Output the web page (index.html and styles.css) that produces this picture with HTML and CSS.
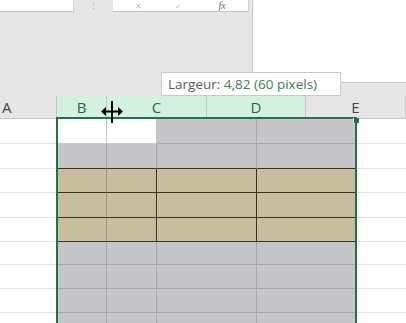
FILE: index.html
```html
<!DOCTYPE html>
<html lang="fr">
<head>
    <meta charset="UTF-8">
    <meta name="viewport" content="width=device-width, initial-scale=1.0">
    <title>Largeur de colonne</title>
    <link rel="stylesheet" href="styles.css">
</head>
<body>
    <div class="sheet">
        <div class="ribbon">
            <div class="namebox"></div>
            <div class="dots">&#8942;</div>
            <div class="fxbox">
                <span class="fx-cancel">&#10005;</span>
                <span class="fx-ok">&#10003;</span>
                <span class="fx-label">fx</span>
            </div>
            <div class="formula"></div>
        </div>

        <div class="colheads">
            <div class="colhead first">A</div>
            <div class="colhead sel">B</div>
            <div class="colhead sel">C</div>
            <div class="colhead sel last-sel">D</div>
            <div class="colhead">E</div>
        </div>

        <div class="grid">
            <div class="row r25">
                <div class="cell out"></div>
                <div class="cell blank"></div>
                <div class="cell blank"></div>
                <div class="cell gray"></div>
                <div class="cell gray"></div>
                <div class="cell out"></div>
            </div>
            <div class="row r25 edge">
                <div class="cell out"></div>
                <div class="cell gray"></div>
                <div class="cell gray"></div>
                <div class="cell gray"></div>
                <div class="cell gray"></div>
                <div class="cell out"></div>
            </div>
            <div class="row r24">
                <div class="cell out"></div>
                <div class="cell tan soft"></div>
                <div class="cell tan"></div>
                <div class="cell tan"></div>
                <div class="cell tan"></div>
                <div class="cell out"></div>
            </div>
            <div class="row r25">
                <div class="cell out"></div>
                <div class="cell tan soft"></div>
                <div class="cell tan"></div>
                <div class="cell tan"></div>
                <div class="cell tan"></div>
                <div class="cell out"></div>
            </div>
            <div class="row r24">
                <div class="cell out"></div>
                <div class="cell tan soft"></div>
                <div class="cell tan"></div>
                <div class="cell tan"></div>
                <div class="cell tan"></div>
                <div class="cell out"></div>
            </div>
            <div class="row r23">
                <div class="cell out"></div>
                <div class="cell gray"></div>
                <div class="cell gray"></div>
                <div class="cell gray"></div>
                <div class="cell gray"></div>
                <div class="cell out"></div>
            </div>
            <div class="row r24">
                <div class="cell out"></div>
                <div class="cell gray"></div>
                <div class="cell gray"></div>
                <div class="cell gray"></div>
                <div class="cell gray"></div>
                <div class="cell out"></div>
            </div>
            <div class="row r24">
                <div class="cell out"></div>
                <div class="cell gray"></div>
                <div class="cell gray"></div>
                <div class="cell gray"></div>
                <div class="cell gray"></div>
                <div class="cell out"></div>
            </div>
            <div class="row r24">
                <div class="cell out"></div>
                <div class="cell gray"></div>
                <div class="cell gray"></div>
                <div class="cell gray"></div>
                <div class="cell gray"></div>
                <div class="cell out"></div>
            </div>
        </div>

        <div class="selection"><span class="handle"></span></div>

        <div class="tooltip">Largeur: <span class="val">4,82 (60 pixels)</span></div>

        <svg class="cursor" width="24" height="24" viewBox="0 0 24 24">
            <rect x="11" y="1" width="2" height="22" fill="#000"/>
            <rect x="5" y="10.5" width="14" height="2" fill="#000"/>
            <polygon points="1,11.5 6,7 6,16" fill="#000"/>
            <polygon points="23,11.5 18,7 18,16" fill="#000"/>
        </svg>
    </div>
</body>
</html>
```

FILE: styles.css
```css
body {
    margin: 0;
    font-family: "Open Sans", "Noto Sans", sans-serif;
}
.sheet {
    position: relative;
    width: 406px;
    height: 323px;
    overflow: hidden;
    background-color: #ffffff;
}

/* formula bar area */
.ribbon {
    display: flex;
    align-items: flex-start;
    height: 96px;
    background-color: #e6e6e6;
}
.namebox {
    width: 73px;
    height: 11px;
    background-color: #ffffff;
    border-right: 1px solid #cfcfcf;
    border-bottom: 1px solid #c6c6c6;
}
.dots {
    width: 39px;
    padding-top: 1px;
    text-align: center;
    font-size: 7px;
    line-height: 9px;
    color: #9a9a9a;
}
.fxbox {
    display: flex;
    align-items: center;
    width: 135px;
    height: 11px;
    background-color: #ffffff;
    border-right: 1px solid #cfcfcf;
    border-bottom: 1px solid #c6c6c6;
}
.fxbox span {
    display: block;
    width: 20px;
    text-align: center;
    font-size: 8px;
    line-height: 10px;
    color: #bdbdbd;
}
.fx-cancel {
    margin-left: 15px;
}
.fx-ok {
    margin-left: 20px;
}
.fxbox .fx-label {
    margin-left: 24px;
    font-family: "Liberation Serif", serif;
    font-style: italic;
    font-size: 10px;
    color: #707070;
}
.formula {
    flex: 1;
    height: 82px;
    margin-left: 3px;
    background-color: #ffffff;
    border-left: 1px solid #c6c6c6;
    border-bottom: 1px solid #c6c6c6;
}

/* column headers */
.colheads {
    display: grid;
    grid-template-columns: 57px 50px 100px 99px 1fr;
    height: 23px;
    background-color: #e6e6e6;
    border-bottom: 1px solid #c6c6c6;
    box-sizing: border-box;
}
.colhead {
    border-right: 1px solid #c6c6c6;
    text-align: center;
    font-size: 15px;
    line-height: 23px;
    color: #444444;
}
.colhead.first {
    text-align: left;
    padding-left: 2px;
}
.colhead.sel {
    background-color: #d3f0e0;
    border-right-color: #a8d8bc;
    color: #1e6b41;
}
.colhead.last-sel {
    border-right-color: #c6c6c6;
}

/* cells */
.row {
    display: grid;
    grid-template-columns: 57px 50px 50px 100px 99px 1fr;
}
.r23 { height: 23px; }
.r24 { height: 24px; }
.r25 { height: 25px; }
.cell {
    box-sizing: border-box;
    border-right: 1px solid #a8a7a9;
    border-bottom: 1px solid #a8a7a9;
}
.cell.out {
    background-color: #ffffff;
    border-right: none;
    border-bottom-color: #e1e1e1;
}
.cell.blank {
    background-color: #ffffff;
    border-bottom-color: #c9c9c9;
    border-right-color: #c2c2c2;
}
.cell.gray {
    background-color: #c6c5c7;
}
.cell.tan {
    background-color: #c9bea0;
    border-right-color: #3a3129;
    border-bottom-color: #3a3129;
}
.cell.tan.soft {
    border-right-color: #9e9684;
}
.edge .cell.gray {
    border-bottom-color: #3a3129;
}

/* overlays */
.selection {
    position: absolute;
    left: 56px;
    top: 117px;
    width: 301px;
    height: 220px;
    box-sizing: border-box;
    border: 2px solid #217346;
}
.handle {
    position: absolute;
    right: -4px;
    top: -1px;
    width: 5px;
    height: 5px;
    background-color: #217346;
    border-left: 1px solid #ffffff;
}
.tooltip {
    position: absolute;
    left: 161px;
    top: 72px;
    width: 180px;
    height: 24px;
    box-sizing: border-box;
    padding-left: 6px;
    background-color: #ffffff;
    border: 1px solid #c9c9c9;
    font-size: 13.5px;
    line-height: 22px;
    color: #5a5a5a;
    white-space: nowrap;
}
.tooltip .val {
    color: #3a7d5a;
}
.cursor {
    position: absolute;
    left: 100px;
    top: 100px;
}
```
